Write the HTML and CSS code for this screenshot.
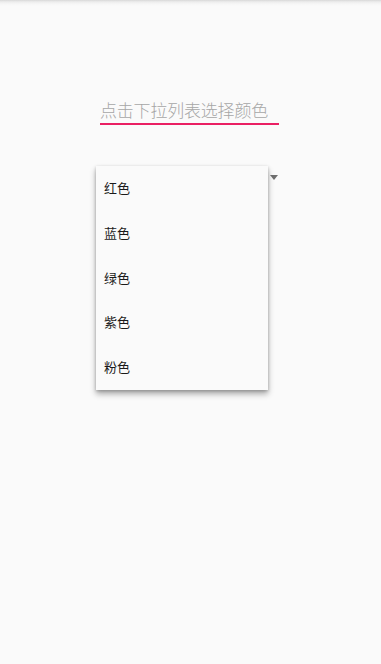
FILE: index.html
```html
<!DOCTYPE html>
<html lang="zh-CN">
<head>
<meta charset="utf-8">
<title>选择颜色</title>
<link rel="stylesheet" href="styles.css">
</head>
<body>
<div class="topshadow"></div>
<div class="field">
  <div class="placeholder">点击下拉列表选择颜色</div>
  <div class="underline"></div>
</div>
<div class="spinner-row">
  <ul class="menu">
    <li class="item">红色</li>
    <li class="item">蓝色</li>
    <li class="item">绿色</li>
    <li class="item">紫色</li>
    <li class="item">粉色</li>
  </ul>
  <div class="arrow"></div>
</div>
</body>
</html>
```
FILE: styles.css
```css
html, body {
  margin: 0;
  padding: 0;
  background: #fafafa;
  font-family: "Noto Sans CJK SC", "Noto Sans", sans-serif;
}
body {
  width: 381px;
  height: 664px;
  overflow: hidden;
}
.topshadow {
  height: 6px;
  background: linear-gradient(to bottom, #d8d8d8 0%, #ececec 30%, #f6f6f6 65%, #fafafa 100%);
}
.field {
  margin-left: 100px;
  margin-top: 92px;
  width: 179px;
}
.placeholder {
  font-size: 17px;
  line-height: 24px;
  height: 24px;
  color: #a6a6a6;
  white-space: nowrap;
  letter-spacing: -0.2px;
  font-weight: 300;
}
.underline {
  margin-top: 1px;
  height: 2px;
  background: #ea1f63;
}
.spinner-row {
  display: flex;
  align-items: flex-start;
  margin-top: 41px;
  margin-left: 96px;
}
.menu {
  list-style: none;
  margin: 0;
  padding: 0;
  width: 172px;
  height: 224px;
  background: #fafafa;
  box-shadow: 0 4px 6px rgba(0,0,0,0.32), 0 1px 3px rgba(0,0,0,0.2);
  position: relative;
  z-index: 2;
}
.item {
  height: 44.8px;
  line-height: 44.8px;
  padding-left: 8px;
  font-size: 13px;
  color: #1a1a1a;
}
.arrow {
  margin-left: 2px;
  margin-top: 9px;
  width: 0;
  height: 0;
  border-left: 4px solid transparent;
  border-right: 4px solid transparent;
  border-top: 5px solid #6f6f6f;
}
```
